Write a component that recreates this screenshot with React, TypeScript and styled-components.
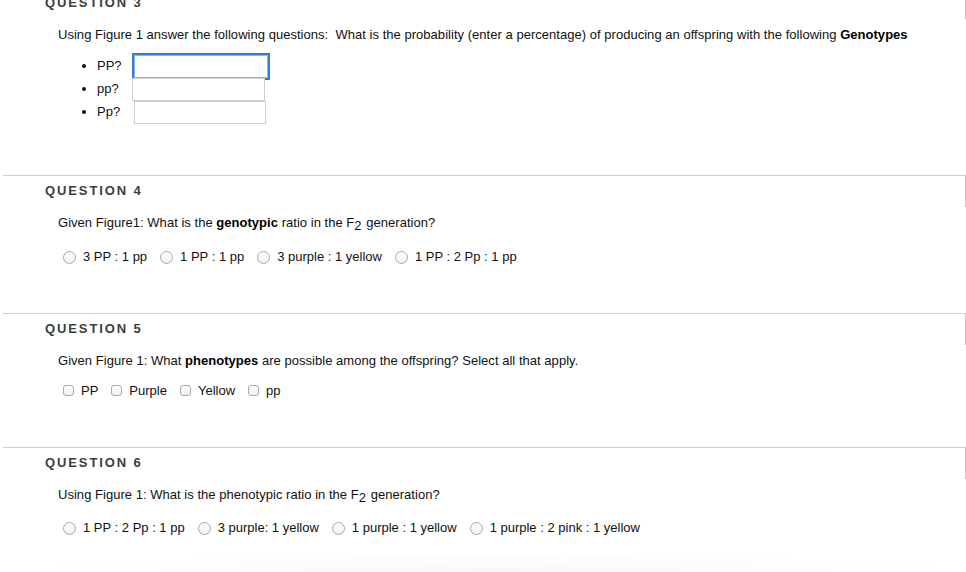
import styled, { createGlobalStyle } from "styled-components";

const GlobalStyle = createGlobalStyle`
	html, body {
		margin: 0;
		padding: 0;
		background: #fff;
		overflow: hidden;
	}
	body {
		font-family: "Liberation Sans", Arial, sans-serif;
		font-size: 13px;
		color: #111;
	}
`;

type Choice = { kind: "radio" | "checkbox"; labels: string[]; gap: number };

function Options({ kind, labels, gap }: Choice) {
	return (
		<Opt.Row $gap={gap}>
			{labels.map((l) => (
				<Opt.Item key={l}>
					{kind === "radio" ? <Opt.Radio /> : <Opt.Check />}
					<span>{l}</span>
				</Opt.Item>
			))}
		</Opt.Row>
	);
}

function App() {
	return (
		<>
			<GlobalStyle />
			<Page>
				<Section $height={188}>
					<Header>QUESTION 3</Header>
					<Body>
						<Prompt>
							Using Figure 1 answer the following questions:&nbsp; What is the probability (enter a
							percentage) of producing an offspring with the following <b>Genotypes</b>
						</Prompt>
						<Blanks>
							<Blank.Item>
								<Blank.Label>PP?</Blank.Label>
								<Blank.Input $focused $shift={0} />
							</Blank.Item>
							<Blank.Item>
								<Blank.Label>pp?</Blank.Label>
								<Blank.Input $shift={1} />
							</Blank.Item>
							<Blank.Item>
								<Blank.Label>Pp?</Blank.Label>
								<Blank.Input $shift={2} />
							</Blank.Item>
						</Blanks>
					</Body>
				</Section>

				<Section $height={138}>
					<Header>QUESTION 4</Header>
					<Body>
						<Prompt>
							Given Figure1: What is the <b>genotypic</b> ratio in the F<Sub>2</Sub> generation?
						</Prompt>
						<Options
							kind="radio"
							gap={17}
							labels={["3 PP : 1 pp", "1 PP : 1 pp", "3 purple : 1 yellow", "1 PP : 2 Pp : 1 pp"]}
						/>
					</Body>
				</Section>

				<Section $height={134}>
					<Header>QUESTION 5</Header>
					<Body>
						<Prompt>
							Given Figure 1: What <b>phenotypes</b> are possible among the offspring? Select all that apply.
						</Prompt>
						<Options kind="checkbox" gap={13} labels={["PP", "Purple", "Yellow", "pp"]} />
					</Body>
				</Section>

				<Section $height={125}>
					<Header>QUESTION 6</Header>
					<Body>
						<Prompt>
							Using Figure 1: What is the phenotypic ratio in the F<Sub>2</Sub> generation?
						</Prompt>
						<Options
							kind="radio"
							gap={16}
							labels={[
								"1 PP : 2 Pp : 1 pp",
								"3 purple: 1 yellow",
								"1 purple : 1 yellow",
								"1 purple : 2 pink : 1 yellow",
							]}
						/>
					</Body>
					<Shade />
				</Section>
			</Page>
		</>
	);
}
export default App;

const Page = styled.div`
	margin-top: -13px;
	padding-left: 3px;
	width: 963px;
`;

const Section = styled.section<{ $height: number }>`
	position: relative;
	height: ${(p) => p.$height}px;
	box-sizing: border-box;
	border-top: 1px solid #cfcfcf;
`;

const Header = styled.div`
	height: 31px;
	box-sizing: border-box;
	display: flex;
	align-items: center;
	padding: 0 0 3px 42px;
	border-right: 1px solid #c8c8c8;
	font-size: 13px;
	font-weight: bold;
	letter-spacing: 1.9px;
	color: #3d3d3d;
`;

const Body = styled.div`
	padding-left: 55px;
	padding-top: 8px;
`;

const Prompt = styled.p`
	margin: 0;
	line-height: 15px;
	letter-spacing: 0.03px;
	color: #111;
	b {
		color: #000;
	}
`;

const Sub = styled.span`
	font-size: 13px;
	position: relative;
	top: 3px;
	line-height: 0;
	margin-right: 1px;
`;

const Blanks = styled.ul`
	margin: 13px 0 0;
	padding-left: 39px;
	list-style: disc;
`;

const Blank = {
	Item: styled.li`
		height: 23px;
		line-height: 22px;
	`,
	Label: styled.span`
		display: inline-block;
		vertical-align: top;
	`,
	Input: styled.input<{ $focused?: boolean; $shift: number }>`
		vertical-align: top;
		box-sizing: border-box;
		height: 23px;
		width: ${(p) => 134 - p.$shift}px;
		margin: 0 0 0 ${(p) => 12 + p.$shift}px;
		padding: 0 4px;
		border: 1px solid ${(p) => (p.$focused ? "#8fb8e6" : "#cfcfcf")};
		background: #fff;
		outline: ${(p) => (p.$focused ? "2px solid #2f7fd6" : "none")};
		outline-offset: 0;
		font: inherit;
	`,
};

const Opt = {
	Row: styled.div<{ $gap: number }>`
		display: flex;
		align-items: center;
		gap: 13px;
		margin-top: ${(p) => p.$gap}px;
		padding-left: 5px;
		height: 18px;
	`,
	Item: styled.label`
		display: flex;
		align-items: center;
		gap: 7px;
		color: #111;
		white-space: nowrap;
	`,
	Radio: styled.span`
		width: 13px;
		height: 13px;
		box-sizing: border-box;
		border-radius: 50%;
		border: 1px solid #a9a9a9;
		background: linear-gradient(#fdfdfd, #f1f1f1);
		margin-top: 3px;
	`,
	Check: styled.span`
		width: 11px;
		height: 11px;
		box-sizing: border-box;
		border-radius: 3px;
		border: 1px solid #a9a9a9;
		background: linear-gradient(#fdfdfd, #f1f1f1);
		margin-top: 1px;
	`,
};

const Shade = styled.div`
	position: absolute;
	left: 40px;
	right: 20px;
	bottom: 0;
	height: 20px;
	background: radial-gradient(ellipse 55% 100% at 50% 100%, rgba(0, 0, 0, 0.03), rgba(0, 0, 0, 0));
	pointer-events: none;
`;
